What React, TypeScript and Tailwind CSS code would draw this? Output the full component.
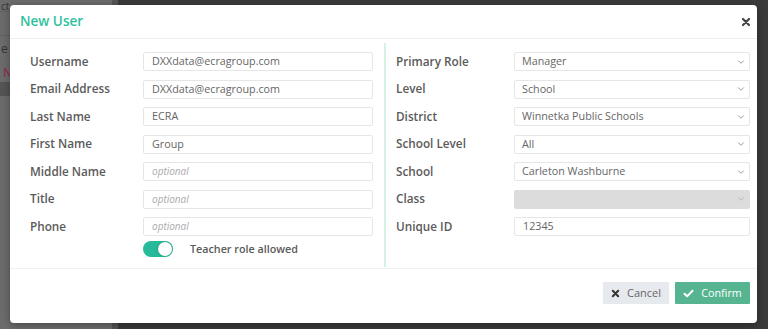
import { ChevronDown } from 'lucide-react';

const leftFields = [
  { label: 'Username', value: 'DXXdata@ecragroup.com' },
  { label: 'Email Address', value: 'DXXdata@ecragroup.com' },
  { label: 'Last Name', value: 'ECRA' },
  { label: 'First Name', value: 'Group' },
  { label: 'Middle Name', value: '' },
  { label: 'Title', value: '' },
  { label: 'Phone', value: '' },
];

const rightFields = [
  { label: 'Primary Role', value: 'Manager', select: true },
  { label: 'Level', value: 'School', select: true },
  { label: 'District', value: 'Winnetka Public Schools', select: true },
  { label: 'School Level', value: 'All', select: true },
  { label: 'School', value: 'Carleton Washburne', select: true },
  { label: 'Class', value: '', select: true, disabled: true },
  { label: 'Unique ID', value: '12345', select: false },
];

function TimesIcon({ className }: { className?: string }) {
  return (
    <svg viewBox="0 0 10 10" className={className}>
      <path d="M2 2 L8 8 M8 2 L2 8" stroke="currentColor" strokeWidth="2.2" strokeLinecap="round" />
    </svg>
  );
}

function CheckIcon({ className }: { className?: string }) {
  return (
    <svg viewBox="0 0 12 10" className={className}>
      <path d="M1.5 5.2 L4.5 8 L10.5 2" fill="none" stroke="currentColor" strokeWidth="2.2" strokeLinecap="round" strokeLinejoin="round" />
    </svg>
  );
}

function TextField({ value }: { value: string }) {
  return (
    <div className="h-[19px] flex-1 flex items-center px-[8px] bg-white border border-[#e6e6e6] rounded-[2px]">
      {value ? (
        <span className="text-[10.75px] text-[#666]">{value}</span>
      ) : (
        <span className="text-[10px] italic text-[#aaa]">optional</span>
      )}
    </div>
  );
}

function SelectField({ value, disabled }: { value: string; disabled?: boolean }) {
  return (
    <div
      className={`h-[19px] flex-1 flex items-center justify-between pl-[7px] pr-[3px] border rounded-[2px] ${
        disabled ? 'bg-[#dcdcdc] border-[#dcdcdc]' : 'bg-white border-[#e6e6e6]'
      }`}
    >
      <span className="text-[10.75px] text-[#666]">{value}</span>
      <ChevronDown size={10} strokeWidth={1.75} className={disabled ? 'text-[#aaa]' : 'text-[#777]'} />
    </div>
  );
}

export default function App() {
  return (
    <div className="relative w-[768px] h-[329px] overflow-hidden bg-[#3b3b3b] font-['Open_Sans',sans-serif]">
      {/* page behind overlay */}
      <div className="absolute left-0 top-0 bottom-0 w-[118px] bg-[#6c6c6c] border-r-[6px] border-[#555] flex flex-col">
        <div className="h-[12px] border-b border-[#5f5f5f] text-[10px] leading-[12px] text-[#333] pl-[1px]">ct</div>
        <div className="h-[24px] border-b border-[#5f5f5f]" />
        <div className="h-[28px] text-[12px] text-[#333] pl-[1px] pt-[4px]">e</div>
        <div className="h-[16px] text-[12px] font-semibold text-[#8a3550] pl-[3px]">N</div>
        <div className="h-[14px] bg-[#555] w-[10px] mt-[2px]" />
      </div>

      {/* modal */}
      <div className="absolute left-[10px] top-[5px] w-[747px] h-[318px] bg-white rounded-[4px] shadow-[0_2px_8px_rgba(0,0,0,0.35)] flex flex-col">
        <div className="h-[34px] flex items-center justify-between pl-[10px] pr-[6px] border-b border-[#eeeeee]">
          <span className="text-[13.5px] font-semibold text-[#2fbf9c]">New User</span>
          <TimesIcon className="w-[10px] h-[10px] text-[#444]" />
        </div>

        <div className="h-[230px] flex border-b border-[#f0f0f0] pt-[13px]">
          {/* left column */}
          <div className="w-[364px] flex flex-col gap-[8.5px] pl-[20px] pr-[1px]">
            {leftFields.map(f => (
              <div key={f.label} className="flex items-center">
                <div className="w-[113px] text-[11.75px] font-semibold text-[#5a5a5a]">{f.label}</div>
                <TextField value={f.value} />
              </div>
            ))}
            <div className="flex items-center pl-[113px] mt-[-4px]">
              <div className="relative w-[30px] h-[16px] rounded-full bg-[#26b99a]">
                <div className="absolute right-[1px] top-[1px] w-[14px] h-[14px] rounded-full bg-white shadow-[0_0_2px_rgba(0,0,0,0.3)]" />
              </div>
              <span className="ml-[17px] text-[10.75px] font-semibold text-[#5a5a5a]">Teacher role allowed</span>
            </div>
          </div>

          <div className="w-[2px] mt-[-9px] mb-[1px] ml-[10px] bg-[#d6f1e8]" />

          {/* right column */}
          <div className="flex-1 flex flex-col gap-[8.5px] pl-[10px] pr-[7px]">
            {rightFields.map(f => (
              <div key={f.label} className="flex items-center">
                <div className="w-[118px] text-[11.75px] font-semibold text-[#5a5a5a]">{f.label}</div>
                {f.select ? <SelectField value={f.value} disabled={f.disabled} /> : <TextField value={f.value} />}
              </div>
            ))}
          </div>
        </div>

        <div className="flex-1 flex justify-end items-start pt-[13px] pr-[7px] gap-[6px]">
          <button className="h-[22px] w-[66px] flex items-center justify-center gap-[7px] bg-[#e6e9ed] text-[#666] text-[11px] rounded-[1px]">
            <TimesIcon className="w-[9px] h-[9px] text-[#333]" />
            Cancel
          </button>
          <button className="h-[22px] w-[75px] flex items-center justify-center gap-[7px] bg-[#56b590] text-white text-[10.75px] rounded-[1px]">
            <CheckIcon className="w-[11px] h-[9px] text-white" />
            Confirm
          </button>
        </div>
      </div>
    </div>
  );
}
